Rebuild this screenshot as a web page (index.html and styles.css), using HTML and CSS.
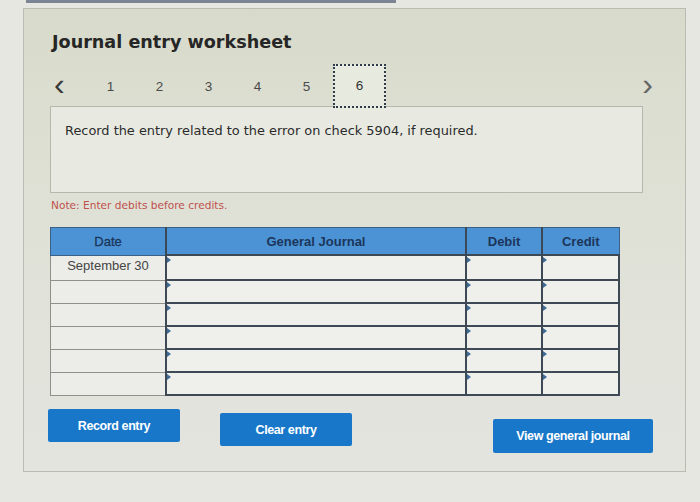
FILE: index.html
```html
<!DOCTYPE html>
<html lang="en">
<head>
    <meta charset="UTF-8">
    <title>Journal entry worksheet</title>
    <link rel="stylesheet" href="styles.css">
</head>
<body>
    <div class="topbar"></div>
    <div class="panel">
        <h2 class="title">Journal entry worksheet</h2>

        <div class="steps">
            <span class="arrow">&lsaquo;</span>
            <span class="step">1</span>
            <span class="step">2</span>
            <span class="step">3</span>
            <span class="step">4</span>
            <span class="step">5</span>
            <span class="step current">6</span>
            <span class="arrow next">&rsaquo;</span>
        </div>

        <div class="instruction">Record the entry related to the error on check 5904, if required.</div>

        <div class="note">Note: Enter debits before credits.</div>

        <table class="journal">
            <thead>
                <tr>
                    <th class="col-date">Date</th>
                    <th class="col-gj">General Journal</th>
                    <th class="col-amt">Debit</th>
                    <th class="col-amt2">Credit</th>
                </tr>
            </thead>
            <tbody>
                <tr class="first">
                    <td class="date">September 30</td>
                    <td class="inp"></td>
                    <td class="inp"></td>
                    <td class="inp"></td>
                </tr>
                <tr>
                    <td class="date"></td>
                    <td class="inp"></td>
                    <td class="inp"></td>
                    <td class="inp"></td>
                </tr>
                <tr>
                    <td class="date"></td>
                    <td class="inp"></td>
                    <td class="inp"></td>
                    <td class="inp"></td>
                </tr>
                <tr>
                    <td class="date"></td>
                    <td class="inp"></td>
                    <td class="inp"></td>
                    <td class="inp"></td>
                </tr>
                <tr>
                    <td class="date"></td>
                    <td class="inp"></td>
                    <td class="inp"></td>
                    <td class="inp"></td>
                </tr>
                <tr>
                    <td class="date"></td>
                    <td class="inp"></td>
                    <td class="inp"></td>
                    <td class="inp"></td>
                </tr>
            </tbody>
        </table>

        <div class="actions">
            <button class="btn record">Record entry</button>
            <button class="btn clear">Clear entry</button>
            <button class="btn view">View general journal</button>
        </div>
    </div>
</body>
</html>
```

FILE: styles.css
```css
body, html {
    margin: 0;
    padding: 0;
    width: 700px;
    height: 502px;
    overflow: hidden;
    background-color: #e6e7e1;
    font-family: "Liberation Sans", Arial, sans-serif;
}
.topbar {
    height: 3px;
    width: 370px;
    margin-left: 26px;
    background-color: #7b8593;
}
.panel {
    margin: 5px 14px 0 23px;
    height: 464px;
    box-sizing: border-box;
    border: 1px solid #b9bcb1;
    background: linear-gradient(#d8dbcb, #dfe1d6 45%, #e4e4df);
    padding: 21px 32px 0 26px;
}
.title {
    margin: 0 0 0 2px;
    font-family: "DejaVu Sans", Verdana, sans-serif;
    font-size: 17.6px;
    line-height: 24px;
    font-weight: bold;
    color: #262626;
}
.steps {
    display: flex;
    align-items: center;
    height: 44px;
    margin-top: 10px;
}
.arrow {
    flex: none;
    width: 36px;
    font-size: 32px;
    line-height: 30px;
    color: #3a3a3a;
    padding-left: 4px;
    box-sizing: border-box;
    margin-top: -4px;
}
.arrow.next {
    margin-left: auto;
    width: auto;
    color: #666;
    padding-left: 0;
}
.step {
    flex: none;
    width: 49px;
    text-align: center;
    font-size: 13.5px;
    color: #4a4a4a;
}
.step.current {
    width: 53px;
    height: 44px;
    line-height: 40px;
    box-sizing: border-box;
    border: 2px dotted #2f3b48;
    background-color: #e6eadf;
    margin-left: 2px;
    color: #333;
    position: relative;
    z-index: 1;
}
.instruction {
    width: 593px;
    height: 87px;
    box-sizing: border-box;
    margin-top: -2px;
    padding: 16px 14px;
    border: 1px solid #b5b8ad;
    background-color: #e8eae2;
    font-family: "DejaVu Sans", Verdana, sans-serif;
    font-size: 12.9px;
    color: #2b2b2b;
}
.note {
    margin: 6px 0 0 1px;
    font-family: "DejaVu Sans", Verdana, sans-serif;
    font-size: 10.6px;
    color: #c0504e;
}
.journal {
    margin-top: 16px;
    border-collapse: collapse;
    table-layout: fixed;
    width: 570px;
}
.journal th {
    height: 26px;
    padding: 0;
    background-color: #4c93d6;
    color: #1b365a;
    font-size: 13px;
    font-weight: bold;
    border: 1px solid #3c5f85;
}
.journal th.col-date {
    width: 114px;
    font-weight: normal;
    -webkit-text-stroke: 0.3px #1b365a;
}
.journal th.col-gj {
    width: 298px;
    border-left: 2px solid #3b4856;
}
.journal th.col-amt {
    width: 74px;
    border-left: 2px solid #3b4856;
}
.journal th.col-amt2 {
    border-left: 2px solid #3b4856;
}
.journal td {
    height: 21px;
    padding: 0;
}
.journal tr.first td {
    height: 21px;
    vertical-align: top;
    padding-top: 2px;
}
.journal td.date {
    border: 1px solid #8e918a;
    background-color: #ecede8;
    text-align: center;
    font-size: 13px;
    color: #444;
}
.journal td.inp {
    border: 2px solid #3d4955;
    background-color: #eff0ec;
    position: relative;
}
.journal td.inp::before {
    content: "";
    position: absolute;
    top: 1px;
    left: 0;
    border-top: 3px solid transparent;
    border-bottom: 3px solid transparent;
    border-left: 4px solid #3e6a96;
}
.actions {
    display: flex;
    align-items: flex-start;
    margin: 13px 0 0 -2px;
}
.btn {
    height: 33px;
    border: none;
    border-radius: 2px;
    background-color: #1877c9;
    color: #fff;
    font-family: "Liberation Sans", Arial, sans-serif;
    font-size: 12.5px;
    font-weight: bold;
    letter-spacing: -0.4px;
    cursor: pointer;
}
.btn.record {
    width: 132px;
}
.btn.clear {
    width: 132px;
    margin-left: 40px;
    margin-top: 4px;
}
.btn.view {
    width: 160px;
    margin-left: auto;
    margin-top: 10px;
    height: 34px;
}
```
